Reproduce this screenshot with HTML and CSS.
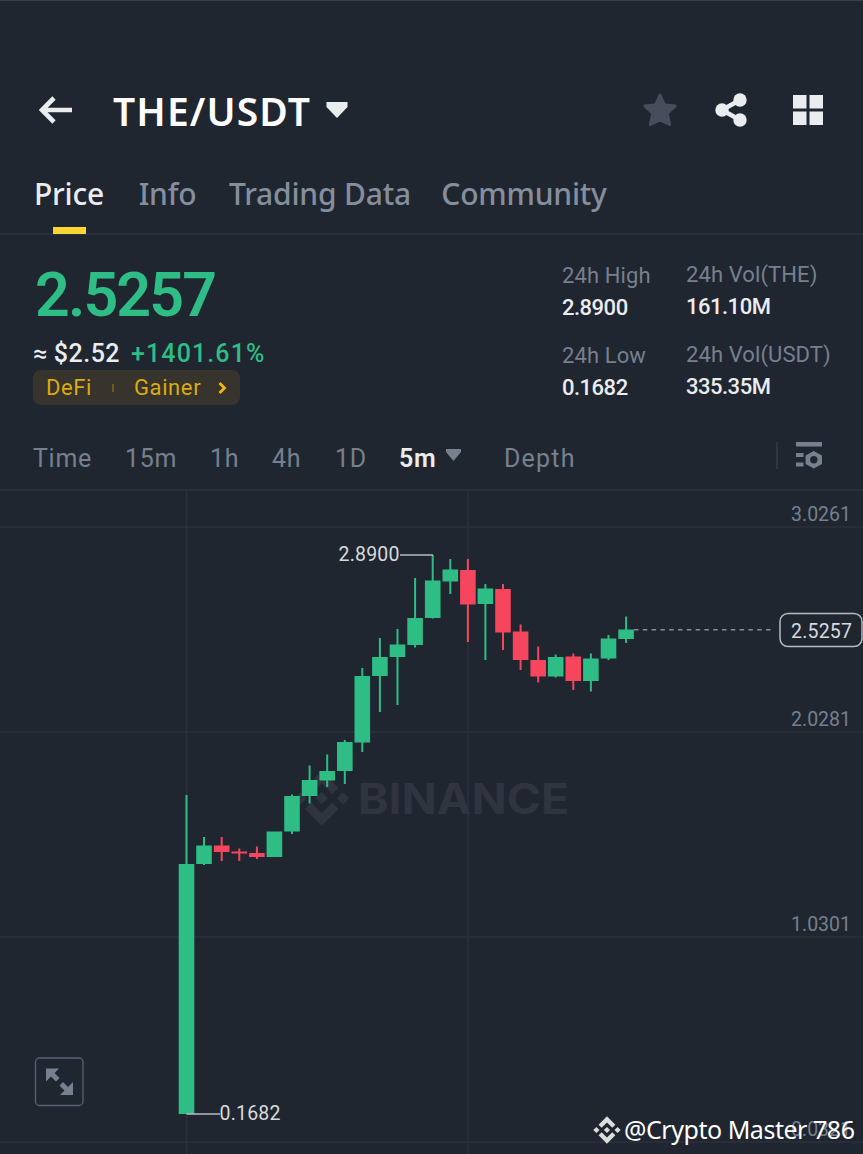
FILE: index.html
```html
<!DOCTYPE html>
<html lang="en">
<head>
    <meta charset="UTF-8">
    <meta name="viewport" content="width=device-width, initial-scale=1.0">
    <title>THE/USDT</title>
    <link rel="stylesheet" href="styles.css">
</head>
<body>
    <header class="topbar">
        <svg class="back" width="34" height="28" viewBox="0 0 34 28">
            <path d="M33 14H4M15 2L3 14l12 12" fill="none" stroke="#eaecef" stroke-width="4.6"/>
        </svg>
        <h1>THE/USDT</h1>
        <svg class="caret" width="22" height="16" viewBox="0 0 22 16">
            <path d="M.5 0h21v5L11 16 .5 5z" fill="#eaecef"/>
        </svg>
        <div class="actions">
            <svg width="34" height="34" viewBox="0 0 34 34">
                <path d="M17 2l4.4 9.8 10.6 1.300-7.800 7.300 2.400 11.100L17 27l-9.600 4.500 2.400-11.100L2 13.100l10.600-1.300z" fill="#474d5b" stroke="#474d5b" stroke-width="3" stroke-linejoin="round"/>
            </svg>
            <svg width="32" height="34" viewBox="0 0 32 34">
                <path d="M25 7L7 17l18 10" fill="none" stroke="#eaecef" stroke-width="4.600"/>
                <circle cx="25" cy="7" r="6.700" fill="#eaecef"/>
                <circle cx="7" cy="17" r="6.700" fill="#eaecef"/>
                <circle cx="25" cy="27" r="6.700" fill="#eaecef"/>
            </svg>
            <svg width="30" height="30" viewBox="0 0 30 30">
                <path d="M0 0h13.500v13.500H0zM16.500 0H30v13.500H16.500zM0 16.500h13.500V30H0zM16.500 16.500H30V30H16.500z" fill="#eaecef"/>
            </svg>
        </div>
    </header>

    <nav class="tabs">
        <a class="tab active">Price</a>
        <a class="tab info">Info</a>
        <a class="tab trading">Trading Data</a>
        <a class="tab community">Community</a>
    </nav>

    <section class="summary">
        <div class="quote">
            <div class="price">2.5257</div>
            <div class="change"><span class="approx">≈</span><span class="usd">$2.52</span><span class="percent">+1401.61%</span></div>
            <div class="tags">
                <span class="defi">DeFi</span>
                <i class="divider"></i>
                <span class="gainer">Gainer</span>
                <svg width="9" height="14" viewBox="0 0 9 14">
                    <path d="M1.500 2l5 5-5 5" fill="none" stroke="#f0b90b" stroke-width="2.800"/>
                </svg>
            </div>
        </div>
        <div class="stats">
            <div class="stat"><span class="label">24h High</span><span class="value">2.8900</span></div>
            <div class="stat vol"><span class="label">24h Vol(THE)</span><span class="value">161.10M</span></div>
            <div class="stat"><span class="label">24h Low</span><span class="value">0.1682</span></div>
            <div class="stat vol"><span class="label">24h Vol(USDT)</span><span class="value">335.35M</span></div>
        </div>
    </section>

    <div class="intervals">
        <span class="i-time">Time</span>
        <span class="i-15m">15m</span>
        <span class="i-1h">1h</span>
        <span class="i-4h">4h</span>
        <span class="i-1d">1D</span>
        <span class="i-5m">5m</span>
        <svg class="i-caret" width="15" height="12" viewBox="0 0 15 12"><path d="M0 0h15v3L7.500 12 0 3z" fill="#76808f"/></svg>
        <span class="i-depth">Depth</span>
        <div class="settings">
            <svg width="26" height="27" viewBox="0 0 26 27">
                <path d="M0 0h26v4.500H0zM0 11h7.500v4H0zM0 20.500h7.500v4H0z" fill="#76808f"/>
                <path d="M17.800 9l8.200 4.500v8.500l-8.200 4.500-8.200-4.500v-8.500zM17.800 14a3.700 3.700 0 1 0 0 7.400 3.700 3.700 0 0 0 0-7.400z" fill="#76808f" fill-rule="evenodd"/>
            </svg>
        </div>
    </div>

    <svg class="chart" width="863" height="663" viewBox="0 491 863 663">
        <defs>
            <path id="logo" d="M16.624 13.920l2.717 2.715-7.353 7.353-7.353-7.352 2.717-2.716 4.636 4.659 4.636-4.659zm4.637-4.636L24 12l-2.715 2.716L18.568 12l2.693-2.716zm-9.272 0l2.716 2.692-2.716 2.717L9.272 12l2.717-2.716zm-9.273 0L5.409 12l-2.692 2.692L0 12l2.716-2.716zM11.989.012l7.353 7.329-2.717 2.715-4.636-4.635-4.636 4.659-2.717-2.715z"/>
        </defs>

        <g class="grid">
            <path d="M0 527H863M0 732H863M0 937H863M0 1142H863M186.500 490V1154M468 490V1154"/>
        </g>

        <g class="watermark">
            <use href="#logo" transform="translate(294.400 771) scale(2.280)"/>
            <text x="358" y="813.500" textLength="211" lengthAdjust="spacingAndGlyphs">BINANCE</text>
        </g>

        <!-- rising candles -->
        <g class="up">
            <path class="wick" d="M186.500 795V1114M204 837V865M292 794.500V834M309.600 765.500V803.500M327.200 754.500V787M344.800 740V784M362.300 668V752M379.900 638V712M397.500 629V705M415.100 578V647.500M432.700 555V618.500M450.300 559V594M485.400 584V660M555.700 654.500V677.500M590.900 653.500V691.500M608.500 635V660M626.100 616.500V643"/>
            <rect x="178.700" y="864" width="15.600" height="250"/>
            <rect x="196.200" y="845.500" width="15.600" height="18.500"/>
            <rect x="266.600" y="831.500" width="15.600" height="25.500"/>
            <rect x="284.200" y="796" width="15.600" height="35.500"/>
            <rect x="301.800" y="780" width="15.600" height="16"/>
            <rect x="319.400" y="771" width="15.600" height="9.500"/>
            <rect x="337" y="742" width="15.600" height="29"/>
            <rect x="354.500" y="676" width="15.600" height="66.500"/>
            <rect x="372.100" y="657" width="15.600" height="19"/>
            <rect x="389.700" y="644.500" width="15.600" height="12.500"/>
            <rect x="407.300" y="618" width="15.600" height="27"/>
            <rect x="424.900" y="580.500" width="15.600" height="37.500"/>
            <rect x="442.500" y="569.500" width="15.600" height="12"/>
            <rect x="477.600" y="588.500" width="15.600" height="15.500"/>
            <rect x="547.900" y="657" width="15.600" height="19.500"/>
            <rect x="583.100" y="658.500" width="15.600" height="22.500"/>
            <rect x="600.700" y="638.500" width="15.600" height="20"/>
            <rect x="618.300" y="629.500" width="15.600" height="9.500"/>
        </g>

        <!-- falling candles -->
        <g class="down">
            <path class="wick" d="M221.700 837V861M239.300 848.500V861M256.900 846.500V859M467.900 559V642M503 584V650M520.600 624.500V670M538.200 646.500V682.500M573.300 653.500V690"/>
            <rect x="213.900" y="845.500" width="15.600" height="6.500"/>
            <rect x="231.500" y="851.500" width="15.600" height="2"/>
            <rect x="249.100" y="853" width="15.600" height="4"/>
            <rect x="460.100" y="570" width="15.600" height="34.500"/>
            <rect x="495.200" y="589" width="15.600" height="43.500"/>
            <rect x="512.800" y="631.500" width="15.600" height="28.500"/>
            <rect x="530.400" y="660" width="15.600" height="16.500"/>
            <rect x="565.500" y="656.500" width="15.600" height="24.500"/>
        </g>

        <g class="marks">
            <path d="M400 555H433M186.500 1114H220"/>
            <path class="last" d="M634 629.800H771"/>
            <text x="338.500" y="560.500" textLength="61">2.8900</text>
            <text x="219.500" y="1120" textLength="61">0.1682</text>
            <rect x="780" y="613.500" width="82" height="33" rx="8"/>
            <text x="791" y="638" textLength="61">2.5257</text>
        </g>

        <g class="axis">
            <text x="791" y="520.500" textLength="60">3.0261</text>
            <text x="791" y="725.500" textLength="60">2.0281</text>
            <text x="791" y="930.500" textLength="60">1.0301</text>
            <text x="791" y="1136" textLength="60">0.0321</text>
        </g>

        <g class="expand">
            <rect x="35.500" y="1058" width="47.500" height="47.500" rx="4"/>
            <path d="M46 1068.500h13l-4.500 4.500 5 5-3.500 3.500-5-5-5 5zM73 1095H60l4.500-4.500-5-5 3.500-3.500 5 5 5-5z"/>
        </g>

        <g class="credit">
            <use href="#logo" transform="translate(593.300 1116.300) scale(1.140)"/>
            <text x="624" y="1139" textLength="231">@Crypto Master 786</text>
        </g>
    </svg>
</body>
</html>
```

FILE: styles.css
```css
* {
    box-sizing: border-box;
}

body {
    margin: 0;
    width: 863px;
    height: 1154px;
    overflow: hidden;
    background-color: #202630;
    border-top: 1px solid #3a404a;
    color: #eaecef;
    font-family: "Roboto", sans-serif;
}

svg {
    display: block;
    flex: none;
}

.topbar {
    display: flex;
    align-items: center;
    height: 98px;
    margin-top: 60px;
    padding: 0 40px 0 39px;
}

h1 {
    margin: 2px 0 0 40px;
    width: 200px;
    font-family: "Noto Sans", sans-serif;
    font-size: 39px;
    font-weight: 600;
    line-height: 50px;
    letter-spacing: 1.1px;
    color: #fff;
    white-space: nowrap;
}

.caret {
    margin-left: 13px;
}

.actions {
    display: flex;
    align-items: center;
    gap: 38px;
    margin-left: auto;
}

.actions svg:last-child {
    margin-left: 8px;
}

.tabs {
    display: flex;
    height: 76px;
    padding-left: 34px;
    border-bottom: 2px solid #29303b;
    color: #848e9c;
    font-family: "Noto Sans", sans-serif;
    font-size: 30px;
    font-weight: 500;
    line-height: 70px;
    letter-spacing: -0.2px;
    white-space: nowrap;
}

.tab {
    display: flex;
    flex-direction: column;
    align-items: center;
}

.active {
    width: 70px;
    color: #eaecef;
}

.active::after {
    content: "";
    width: 33px;
    height: 7px;
    margin-top: -2px;
    background-color: #fcd535;
    flex: none;
}

.info {
    width: 59px;
    margin-left: 34px;
}

.trading {
    width: 180px;
    margin-left: 33px;
}

.community {
    width: 164px;
    margin-left: 32px;
}

.summary {
    display: flex;
    justify-content: space-between;
    height: 190px;
    padding: 25px 31px 0 33px;
}

.price {
    height: 72px;
    padding-left: 2px;
    color: #2ebd85;
    font-size: 61px;
    font-weight: 600;
    line-height: 70px;
    letter-spacing: -1.9px;
}

.change {
    display: flex;
    height: 38px;
    margin-top: 2px;
    font-size: 25px;
    font-weight: 500;
    line-height: 40px;
    letter-spacing: 0.5px;
}

.usd {
    margin-left: 6px;
}

.percent {
    margin-left: 11px;
    color: #2ebd85;
    letter-spacing: 1.1px;
}

.tags {
    display: flex;
    align-items: center;
    width: 207px;
    height: 35px;
    margin-top: -2px;
    padding-left: 13px;
    border-radius: 8px;
    background-color: #36342c;
    color: #dcaa12;
    font-size: 22px;
    letter-spacing: 0.6px;
}

.divider {
    width: 2px;
    height: 8px;
    margin: 0 20px;
    background-color: #6e591f;
}

.tags svg {
    margin-left: 17px;
}

.stats {
    display: grid;
    grid-template-columns: 124px 146px;
    grid-auto-rows: 80px;
    padding-right: 0;
    width: 270px;
}

.stat {
    display: flex;
    flex-direction: column;
    white-space: nowrap;
}

.stat.vol {
    margin-top: -1px;
}

.label {
    height: 31px;
    color: #76808f;
    font-size: 22px;
    line-height: 31px;
    letter-spacing: 0.1px;
}

.value {
    height: 31px;
    font-size: 22px;
    font-weight: 500;
    line-height: 33px;
    letter-spacing: -0.5px;
}

.intervals {
    display: flex;
    height: 66px;
    padding-left: 33px;
    border-bottom: 2px solid #29303b;
    color: #76808f;
    font-size: 25px;
    line-height: 67px;
    letter-spacing: 0.7px;
}

.intervals span {
    flex: none;
}

.i-time {
    width: 92px;
}

.i-15m {
    width: 85px;
}

.i-1h {
    width: 62px;
}

.i-4h {
    width: 63px;
}

.i-1d {
    width: 64px;
}

.i-5m {
    width: 47px;
    color: #eaecef;
    font-weight: 600;
}

.i-caret {
    margin-top: 24px;
}

.i-depth {
    margin-left: 43px;
    letter-spacing: 1.2px;
}

.settings {
    height: 27px;
    margin: 17px 41px 0 auto;
    padding-left: 18px;
    border-left: 2px solid #2f3642;
}

.chart text {
    font-family: "Roboto", sans-serif;
    font-size: 19.5px;
}

.grid path {
    fill: none;
    stroke: #2b313c;
    stroke-width: 1.5;
}

.watermark {
    fill: #2f343f;
}

.chart .watermark text {
    font-family: "Inter", sans-serif;
    font-size: 42px;
    font-weight: 700;
}

.up {
    fill: #2ebd85;
    stroke: none;
}

.up .wick {
    stroke: #2ebd85;
    stroke-width: 2;
}

.down {
    fill: #f6465d;
}

.down .wick {
    stroke: #f6465d;
    stroke-width: 2;
}

.marks text {
    fill: #d8dadd;
}

.marks path {
    stroke: #b7babf;
    stroke-width: 1.5;
}

.marks .last {
    stroke: #888d96;
    stroke-dasharray: 4.5 4.3;
}

.marks rect {
    fill: #202630;
    stroke: #b7babf;
    stroke-width: 1.5;
}

.axis {
    fill: #767f8d;
}

.expand rect {
    fill: none;
    stroke: #596171;
    stroke-width: 1.3;
}

.expand path {
    fill: #76808f;
}

.credit {
    fill: #dcdcdc;
}

.chart .credit text {
    font-family: "Noto Sans", sans-serif;
    font-size: 25px;
    fill: #fff;
}
```
